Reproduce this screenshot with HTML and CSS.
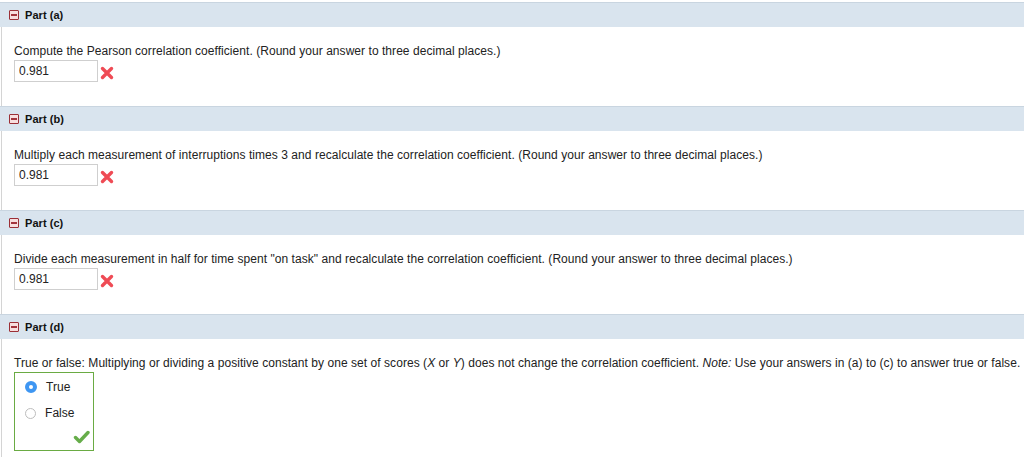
FILE: index.html
```html
<!DOCTYPE html>
<html lang="en">
<head>
  <meta charset="UTF-8">
  <title>Correlation - Parts</title>
  <link rel="stylesheet" href="styles.css">
</head>
<body>

  <div class="part">
    <div class="part-head"><span class="toggle"></span>Part (a)</div>
    <div class="part-body">
      <p class="question">Compute the Pearson correlation coefficient. (Round your answer to three decimal places.)</p>
      <div class="answer">
        <input type="text" value="0.981">
        <svg class="wrong" width="14" height="14" viewBox="0 0 14 14"><path d="M2.5 2.5L11.5 11.5M11.5 2.5L2.5 11.5"/></svg>
      </div>
    </div>
  </div>

  <div class="part">
    <div class="part-head"><span class="toggle"></span>Part (b)</div>
    <div class="part-body">
      <p class="question">Multiply each measurement of interruptions times 3 and recalculate the correlation coefficient. (Round your answer to three decimal places.)</p>
      <div class="answer">
        <input type="text" value="0.981">
        <svg class="wrong" width="14" height="14" viewBox="0 0 14 14"><path d="M2.5 2.5L11.5 11.5M11.5 2.5L2.5 11.5"/></svg>
      </div>
    </div>
  </div>

  <div class="part">
    <div class="part-head"><span class="toggle"></span>Part (c)</div>
    <div class="part-body">
      <p class="question">Divide each measurement in half for time spent "on task" and recalculate the correlation coefficient. (Round your answer to three decimal places.)</p>
      <div class="answer">
        <input type="text" value="0.981">
        <svg class="wrong" width="14" height="14" viewBox="0 0 14 14"><path d="M2.5 2.5L11.5 11.5M11.5 2.5L2.5 11.5"/></svg>
      </div>
    </div>
  </div>

  <div class="part">
    <div class="part-head"><span class="toggle"></span>Part (d)</div>
    <div class="part-body">
      <p class="question">True or false: Multiplying or dividing a positive constant by one set of scores (<i>X</i> or <i>Y</i>) does not change the correlation coefficient. <i>Note:</i> Use your answers in (a) to (c) to answer true or false.</p>
      <div class="choices">
        <label class="choice"><span class="radio checked"></span>True</label>
        <label class="choice"><span class="radio"></span>False</label>
        <svg class="right" width="17" height="14" viewBox="0 0 17 14"><path d="M2.5 7.5L6.5 11.5L15 2.5"/></svg>
      </div>
    </div>
  </div>

</body>
</html>
```

FILE: styles.css
```css
body {
  margin: 0;
  padding-top: 2px;
  font-family: "Liberation Sans", Arial, sans-serif;
  font-size: 12px;
  letter-spacing: 0.05px;
  color: #222;
  background: #fff;
}
.part-head {
  height: 24px;
  border-top: 1px solid #c9d5e0;
  background-color: #d9e4ee;
  font-size: 11px;
  font-weight: bold;
  color: #111;
  display: flex;
  align-items: center;
  padding-left: 9px;
}
.toggle {
  width: 8px;
  height: 8px;
  border: 1px solid #9b2f36;
  border-radius: 1px;
  background: #f7dede;
  margin-right: 6px;
  position: relative;
}
.toggle::after {
  content: "";
  position: absolute;
  left: 1px;
  right: 1px;
  top: 3px;
  height: 2px;
  background: #a3343c;
}
.part-body {
  margin-left: 1px;
  border-left: 1px solid #d4d4d4;
  padding: 17px 0 24px 12px;
}
.part:last-child .part-body {
  padding-bottom: 8px;
}
.question {
  margin: 0 0 2px;
  line-height: 14px;
}
.answer {
  display: flex;
  align-items: center;
}
.answer input {
  width: 74px;
  height: 20px;
  padding: 0 4px;
  margin: 0;
  border: 1px solid #cfcfcf;
  font-family: "Liberation Sans", Arial, sans-serif;
  font-size: 12px;
  color: #222;
}
.wrong {
  margin-left: 2px;
  margin-top: 4px;
}
.wrong path {
  stroke: #ef4b55;
  stroke-width: 3.4;
  stroke-linecap: round;
  fill: none;
}
.choices {
  width: 78px;
  height: 76px;
  margin-top: 1px;
  border: 1px solid #6aab43;
  position: relative;
  padding-top: 1px;
}
.choice {
  display: flex;
  align-items: center;
  height: 26px;
  padding-left: 10px;
  color: #222;
}
.radio {
  width: 11px;
  height: 11px;
  border: 1px solid #bdbdbd;
  border-radius: 50%;
  background: #fff;
  margin-right: 9px;
  box-sizing: border-box;
}
.radio.checked {
  border: 4px solid #3e96f2;
  background: #fff;
  width: 12px;
  height: 12px;
}
.right {
  position: absolute;
  right: 3px;
  bottom: 6px;
}
.right path {
  stroke: #66ad4a;
  stroke-width: 3.4;
  stroke-linecap: round;
  stroke-linejoin: round;
  fill: none;
}
```
